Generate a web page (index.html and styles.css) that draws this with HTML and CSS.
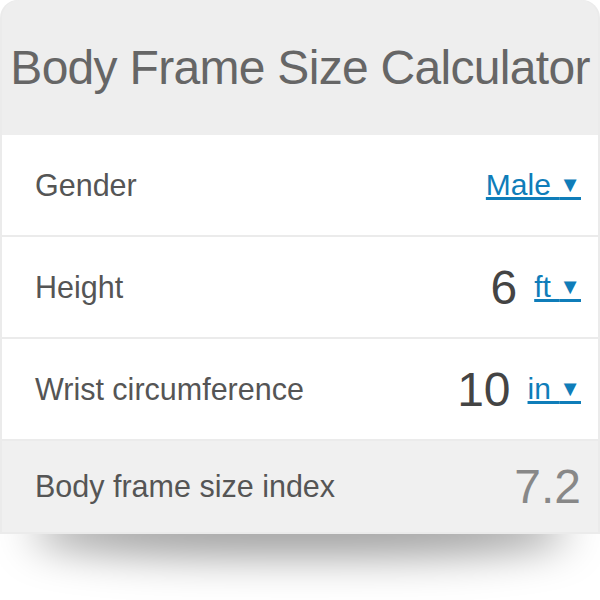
FILE: index.html
```html
<!DOCTYPE html>
<html lang="en">
  <head>
    <meta charset="UTF-8" />
    <meta name="viewport" content="width=device-width, initial-scale=1.0" />
    <title>Body Frame Size Calculator</title>
    <link rel="stylesheet" href="styles.css">
  </head>
  <body>
    <div class="calculator">
      <h1 class="calculator-title">Body Frame Size Calculator</h1>
      <div class="calculator-body">
        <div class="calculator-row">
          <span class="calculator-row__label">Gender</span>
          <div class="calculator-row__input">
            <a href="#" class="unit-select">Male <span class="unit-select__caret">▼</span></a>
          </div>
        </div>
        <div class="calculator-row">
          <span class="calculator-row__label">Height</span>
          <div class="calculator-row__input">
            <span class="calculator-row__value">6</span>
            <a href="#" class="unit-select">ft <span class="unit-select__caret">▼</span></a>
          </div>
        </div>
        <div class="calculator-row">
          <span class="calculator-row__label">Wrist circumference</span>
          <div class="calculator-row__input">
            <span class="calculator-row__value">10</span>
            <a href="#" class="unit-select">in <span class="unit-select__caret">▼</span></a>
          </div>
        </div>
        <div class="calculator-row calculator-row--result">
          <span class="calculator-row__label">Body frame size index</span>
          <div class="calculator-row__input">
            <span class="calculator-row__value calculator-row__value--result">7.2</span>
          </div>
        </div>
      </div>
    </div>
    <div class="calculator-shadow"></div>
  </body>
</html>
```

FILE: styles.css
```css
:root {
  --color-link: #0f7db9;
  --color-label: #555555;
  --color-card: #ebebeb;
}
html,
body {
  min-height: 600px;
}
body {
  margin: 0;
  background: #ffffff;
  font-family: "Liberation Sans", Arial, sans-serif;
}

.calculator {
  position: relative;
  z-index: 1;
  background: var(--color-card);
  border-radius: 18px 18px 0 0;
  padding: 0 2px 2px;
}
.calculator-shadow {
  height: 50px;
  margin: -30px 35px 0;
  background: rgba(0, 0, 0, 0.42);
  border-radius: 40%;
  filter: blur(22px);
}
.calculator-title {
  margin: 0;
  height: 135px;
  display: flex;
  align-items: center;
  justify-content: center;
  background: #eeeeee;
  border-radius: 18px 18px 0 0;
  font-size: 48px;
  font-weight: normal;
  letter-spacing: -0.7px;
  color: #666666;
}
.calculator-body {
  display: flex;
  flex-direction: column;
  gap: 2px;
}
.calculator-row {
  display: flex;
  justify-content: space-between;
  align-items: center;
  height: 100px;
  padding: 0 17px 0 33px;
  background: #ffffff;
}
.calculator-row--result {
  height: 91px;
  background: #f0f0f0;
}
.calculator-row__label {
  font-size: 30.5px;
  color: var(--color-label);
}
.calculator-row__input {
  display: flex;
  align-items: center;
  gap: 17px;
}
.calculator-row__value {
  font-size: 48px;
  color: #444444;
}
.calculator-row__value--result {
  color: #888888;
}

.unit-select {
  font-size: 30px;
  color: var(--color-link);
  text-decoration: underline;
}
.unit-select__caret {
  font-size: 22px;
  vertical-align: 3px;
}
```
